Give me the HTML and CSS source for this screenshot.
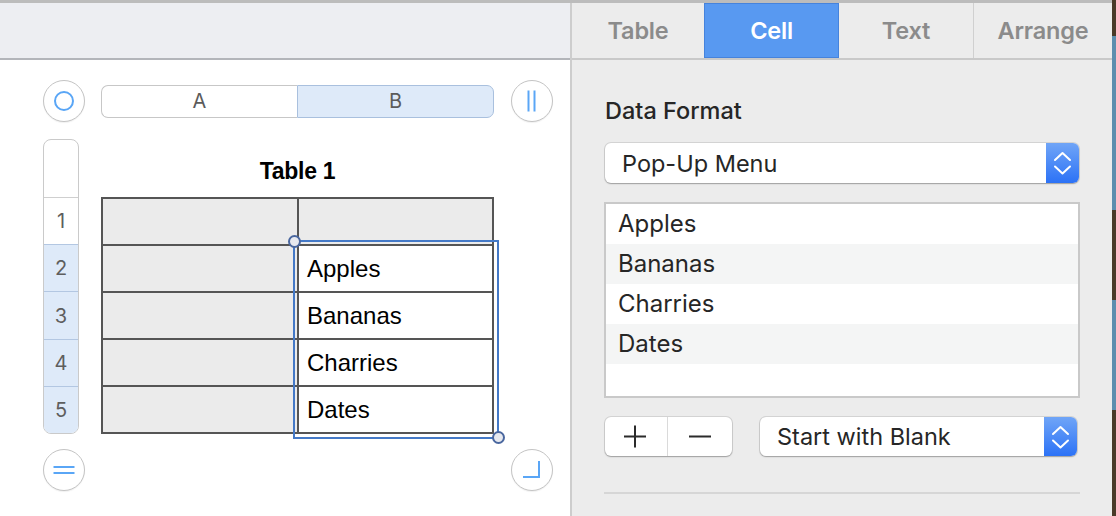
FILE: index.html
```html
<!DOCTYPE html>
<html lang="en">
<head>
<meta charset="utf-8">
<title>Table cell data format</title>
<link rel="stylesheet" href="styles.css">
</head>
<body>
<div class="window">
  <div class="titlestrip"></div>
  <div class="main">
    <section class="canvas-col">
      <div class="toolbar"></div>
      <div class="canvas">
        <div class="round r-tl">
          <svg viewBox="0 0 42 42" width="42" height="42"><circle cx="21" cy="21" r="9" fill="none" stroke="#5aa6f6" stroke-width="2"/></svg>
        </div>
        <div class="colhead">
          <div class="colseg seg-a">A</div>
          <div class="colseg seg-b">B</div>
        </div>
        <div class="round r-tr">
          <svg viewBox="0 0 42 42" width="42" height="42"><path d="M17.5 10.5v21M23.5 10.5v21" stroke="#5aa6f6" stroke-width="2" fill="none"/></svg>
        </div>
        <div class="rowhead">
          <div class="rh-blank"></div>
          <div class="rh-row">1</div>
          <div class="rh-row sel">2</div>
          <div class="rh-row sel">3</div>
          <div class="rh-row sel">4</div>
          <div class="rh-row sel">5</div>
        </div>
        <div class="title">Table 1</div>
        <div class="table-wrap">
          <div class="grid-table">
            <div class="cell gray"></div><div class="cell gray"></div>
            <div class="cell gray"></div><div class="cell white">Apples</div>
            <div class="cell gray"></div><div class="cell white">Bananas</div>
            <div class="cell gray"></div><div class="cell white">Charries</div>
            <div class="cell gray"></div><div class="cell white">Dates</div>
          </div>
          <div class="selection"></div>
          <div class="handle h-tl"></div>
          <div class="handle h-br"></div>
        </div>
        <div class="round r-bl">
          <svg viewBox="0 0 42 42" width="42" height="42"><path d="M10.5 18h21M10.5 24h21" stroke="#5aa6f6" stroke-width="2" fill="none"/></svg>
        </div>
        <div class="round r-br">
          <svg viewBox="0 0 42 42" width="42" height="42"><path d="M12 28h16V12" stroke="#5aa6f6" stroke-width="2" fill="none"/></svg>
        </div>
      </div>
    </section>
    <section class="panel">
      <nav class="tabs">
        <div class="tab">Table</div>
        <div class="tab active">Cell</div>
        <div class="tab">Text</div>
        <div class="tab last">Arrange</div>
      </nav>
      <div class="panel-body">
        <h2 class="heading">Data Format</h2>
        <div class="popup wide">
          <span class="popup-label">Pop-Up Menu</span>
          <span class="stepper">
            <svg viewBox="0 0 33 40" width="33" height="40"><path d="M9 17l7.5-7 7.5 7M9 23.5l7.5 7 7.5-7" stroke="#fff" stroke-width="2" fill="none" stroke-linecap="round" stroke-linejoin="round"/></svg>
          </span>
        </div>
        <div class="list">
          <div class="li">Apples</div>
          <div class="li alt">Bananas</div>
          <div class="li">Charries</div>
          <div class="li alt">Dates</div>
          <div class="li"></div>
        </div>
        <div class="controls">
          <div class="plusminus">
            <div class="pm">
              <svg viewBox="0 0 62 39" width="62" height="39"><path d="M19 19.5h22M30 8.5v22" stroke="#2b2b2b" stroke-width="2" fill="none"/></svg>
            </div>
            <div class="pm">
              <svg viewBox="0 0 64 39" width="64" height="39"><path d="M21 19.5h22" stroke="#2b2b2b" stroke-width="2" fill="none"/></svg>
            </div>
          </div>
          <div class="popup narrow">
            <span class="popup-label">Start with Blank</span>
            <span class="stepper">
              <svg viewBox="0 0 33 40" width="33" height="40"><path d="M9 17l7.5-7 7.5 7M9 23.5l7.5 7 7.5-7" stroke="#fff" stroke-width="2" fill="none" stroke-linecap="round" stroke-linejoin="round"/></svg>
            </span>
          </div>
        </div>
        <div class="separator"></div>
      </div>
    </section>
  </div>
</div>
<div class="desktop"></div>
</body>
</html>
```

FILE: styles.css
```css
html, body {
  margin: 0;
  padding: 0;
}
body {
  width: 1116px;
  height: 516px;
  overflow: hidden;
  display: flex;
  font-family: Inter, "Noto Sans", sans-serif;
  color: #262626;
  background: #fff;
}
.window {
  width: 1112px;
  height: 516px;
  display: flex;
  flex-direction: column;
}
.titlestrip {
  height: 3px;
  background: #bcbcbc;
  flex: none;
}
.main {
  flex: 1;
  display: flex;
  min-height: 0;
}

/* ---------- left canvas ---------- */
.canvas-col {
  width: 570px;
  display: flex;
  flex-direction: column;
  flex: none;
}
.toolbar {
  height: 55px;
  background: #edeef2;
  border-bottom: 2px solid #b3b5ba;
  flex: none;
}
.canvas {
  flex: 1;
  background: #fff;
  padding: 20px 0 0 43px;
  display: grid;
  grid-template-columns: 42px 16px 393px 17px 42px;
  grid-template-rows: 42px 17px 58px 237px 15px 42px;
}
.round {
  width: 42px;
  height: 42px;
  border-radius: 50%;
  border: 1px solid #c4c4c4;
  box-sizing: border-box;
  background: #fff;
  box-shadow: 0 1px 1px rgba(0, 0, 0, 0.06);
  display: flex;
  align-items: center;
  justify-content: center;
  overflow: hidden;
}
.round svg {
  flex: none;
}
.r-tl { grid-column: 1; grid-row: 1; }
.r-tr { grid-column: 5; grid-row: 1; }
.r-bl { grid-column: 1; grid-row: 6; }
.r-br { grid-column: 5; grid-row: 6; }

.colhead {
  grid-column: 3;
  grid-row: 1;
  align-self: center;
  height: 33px;
  display: grid;
  grid-template-columns: 196px 197px;
}
.colseg {
  box-sizing: border-box;
  display: flex;
  align-items: center;
  justify-content: center;
  font-size: 20px;
  color: #5b5b5b;
}
.seg-a {
  border: 1px solid #c7c7c7;
  border-right: none;
  border-radius: 7px 0 0 7px;
  background: #fff;
}
.seg-b {
  border: 1px solid #a9c0de;
  border-radius: 0 7px 7px 0;
  background: #deeaf9;
}

.rowhead {
  grid-column: 1;
  grid-row: 3 / span 2;
  width: 36px;
  box-sizing: border-box;
  border: 1px solid #cacaca;
  border-radius: 8px;
  overflow: hidden;
  display: flex;
  flex-direction: column;
  background: #fff;
}
.rh-blank {
  height: 57px;
  flex: none;
}
.rh-row {
  flex: 1;
  border-top: 1px solid #cfcfcf;
  display: flex;
  align-items: center;
  justify-content: center;
  font-size: 20px;
  color: #5e5e5e;
}
.rh-row.sel {
  background: #deeaf9;
  border-top-color: #b3c7e2;
}

.title {
  grid-column: 3;
  grid-row: 3;
  text-align: center;
  font-family: "Liberation Sans", Arial, sans-serif;
  font-weight: bold;
  font-size: 23px;
  line-height: 23px;
  padding-top: 21px;
  color: #000;
  letter-spacing: -0.3px;
}
.table-wrap {
  grid-column: 3;
  grid-row: 4;
  position: relative;
}
.grid-table {
  width: 393px;
  height: 237px;
  box-sizing: border-box;
  display: grid;
  grid-template-columns: 194px 193px;
  grid-auto-rows: 45px;
  gap: 2px;
  padding: 2px;
  background: #555;
}
.cell {
  font-family: "Liberation Sans", Arial, sans-serif;
  font-size: 24px;
  color: #000;
  display: flex;
  align-items: center;
  padding-left: 8px;
}
.cell.gray { background: #ebebeb; }
.cell.white { background: #fff; }
.selection {
  position: absolute;
  left: 192px;
  top: 43px;
  width: 206px;
  height: 199px;
  box-sizing: border-box;
  border: 2px solid #4479c7;
}
.handle {
  position: absolute;
  width: 13px;
  height: 13px;
  box-sizing: border-box;
  border-radius: 50%;
  background: #e7e9ef;
  border: 2px solid #4a679f;
}
.h-tl { left: 187px; top: 37.5px; }
.h-br { left: 390.5px; top: 234px; }

/* ---------- right panel ---------- */
.panel {
  width: 540px;
  border-left: 2px solid #cdcdcd;
  background: #ececec;
  display: flex;
  flex-direction: column;
  flex: none;
}
.tabs {
  height: 55px;
  border-bottom: 2px solid #c9c9c9;
  display: grid;
  grid-template-columns: 132px 135px 134px 1fr;
  flex: none;
}
.tab {
  display: flex;
  align-items: center;
  justify-content: center;
  font-weight: 600;
  font-size: 23.5px;
  color: #8b8b8b;
  letter-spacing: -0.2px;
}
.tab.active {
  background: #5899f1;
  color: #fff;
  box-shadow: inset 0 0 0 1px #4683dc;
}
.tab.last {
  border-left: 1px solid #d0d0d0;
}
.panel-body {
  padding: 37px 33px 0 33px;
  display: flex;
  flex-direction: column;
}
.heading {
  margin: 0;
  font-size: 23.5px;
  font-weight: 500;
  line-height: 28px;
  color: #262626;
}
.popup {
  height: 40px;
  background: #fff;
  border-radius: 6px;
  box-shadow: 0 0 0 1px rgba(0, 0, 0, 0.1), 0 1px 1.5px rgba(0, 0, 0, 0.25);
  display: flex;
  align-items: center;
  justify-content: space-between;
  overflow: hidden;
}
.popup.wide {
  margin-top: 18px;
}
.popup-label {
  padding-left: 17px;
  font-size: 23.5px;
  color: #262626;
}
.stepper {
  width: 33px;
  height: 40px;
  background: linear-gradient(#70a5f7, #2c72f6);
  display: flex;
  flex: none;
}
.list {
  margin: 19px -1px 0 -1px;
  height: 196px;
  box-sizing: border-box;
  border: 2px solid #c9c9c9;
  background: #fff;
  display: flex;
  flex-direction: column;
}
.li {
  height: 40px;
  flex: none;
  display: flex;
  align-items: center;
  padding-left: 12px;
  padding-bottom: 2px;
  box-sizing: border-box;
  font-size: 24px;
  color: #262626;
}
.li.alt {
  background: #f4f5f5;
}
.controls {
  margin-top: 19px;
  display: flex;
  gap: 28px;
  height: 39px;
}
.plusminus {
  width: 127px;
  height: 39px;
  background: #fff;
  border-radius: 6px;
  box-shadow: 0 0 0 1px rgba(0, 0, 0, 0.1), 0 1px 1.5px rgba(0, 0, 0, 0.25);
  display: grid;
  grid-template-columns: 62px 1fr;
  overflow: hidden;
}
.pm {
  display: flex;
}
.pm + .pm {
  border-left: 1px solid #dadada;
}
.popup.narrow {
  flex: 1;
  height: 39px;
  margin-right: 2px;
}
.popup.narrow .stepper {
  height: 39px;
}
.separator {
  margin: 36px -1px 0 -1px;
  height: 2px;
  background: #d6d6d6;
}

/* ---------- desktop edge ---------- */
.desktop {
  width: 4px;
  height: 516px;
  flex: none;
  background: linear-gradient(to bottom,
    #4a3a28 0 36px,
    #5d8eae 36px 210px,
    #4a3a28 210px 300px,
    #5d8eae 300px 410px,
    #4a3a28 410px 516px);
}
```
